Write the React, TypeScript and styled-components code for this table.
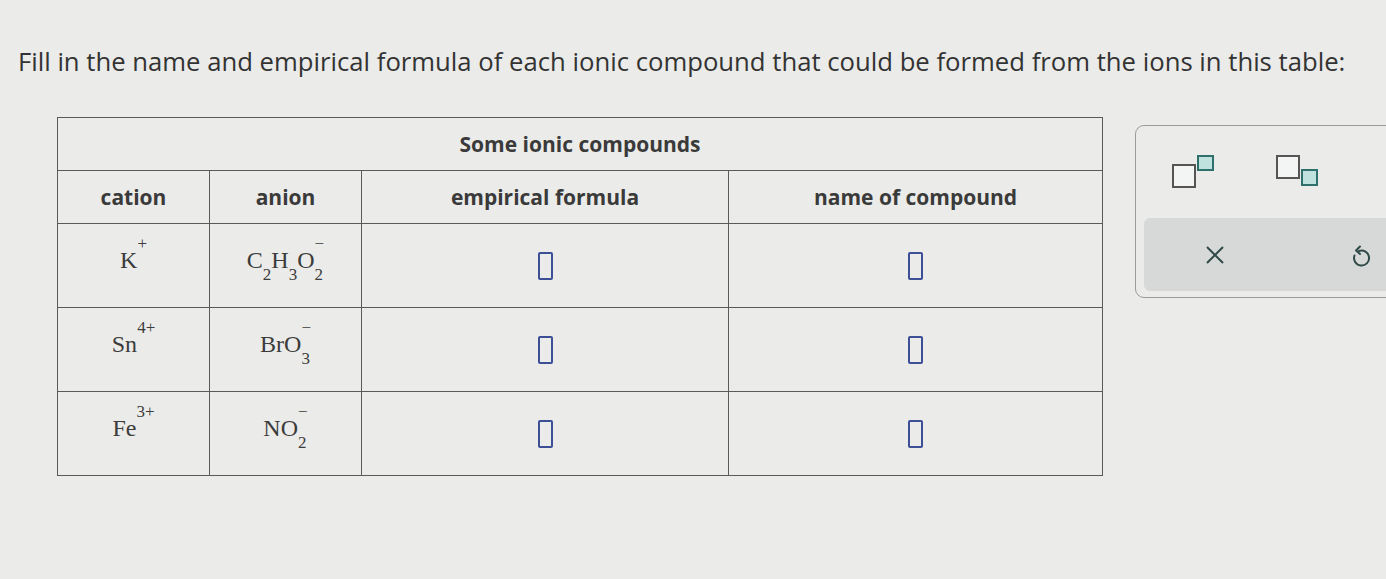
import styled, { createGlobalStyle } from "styled-components";

const GlobalStyle = createGlobalStyle`
  html, body {
    margin: 0;
    padding: 0;
    background: #ebebe9;
    overflow: hidden;
  }
`;

const Page = styled.div`
  width: 1386px;
  height: 579px;
  padding: 44px 0 0 18px;
  box-sizing: border-box;
  font-family: "Open Sans", "Liberation Sans", sans-serif;
  color: #333;
`;

const Question = styled.p`
  margin: 0;
  font-size: 25.7px;
  line-height: 36px;
  white-space: nowrap;
`;

const Body = styled.div`
  display: flex;
  align-items: flex-start;
  margin-top: 37px;
  padding-left: 39px;
`;

const Table = styled.table`
  border-collapse: collapse;
  width: 1045px;
  table-layout: fixed;
`;

const Cell = styled.td<{ h?: number }>`
  border: 1.5px solid #5a5a5a;
  text-align: center;
  vertical-align: middle;
  height: ${(p) => p.h ?? 83}px;
  padding: 0;
`;

const HeadCell = styled(Cell)`
  font-size: 21px;
  font-weight: 700;
  color: #3a3a3a;
`;

const Ion = styled.span`
  font-family: "Liberation Serif", "Times New Roman", serif;
  font-size: 24px;
  color: #3c3c3c;
  display: inline-flex;
  align-items: center;
  transform: translateY(-5px);
`;

const Scripts = styled.span`
  display: inline-flex;
  flex-direction: column;
  align-items: flex-start;
  font-size: 17px;
  line-height: 17px;
`;

const Sup = styled.span`
  height: 17px;
  transform: translateY(-9px);
`;

const Sub = styled.span`
  height: 17px;
  transform: translateY(5px);
`;

const AnswerBox = styled.span`
  display: inline-block;
  width: 11px;
  height: 24px;
  border: 2px solid #3d4f96;
  border-radius: 2px;
  vertical-align: middle;
`;

const Panel = styled.div`
  margin-left: 32px;
  margin-top: 8px;
  width: 280px;
  flex-shrink: 0;
  height: 173px;
  border: 1.5px solid #9a9c9b;
  border-radius: 9px;
  box-sizing: border-box;
  display: flex;
  flex-direction: column;
`;

const IconRow = styled.div`
  display: flex;
  align-items: center;
  gap: 58px;
  height: 92px;
  padding-left: 35px;
`;

const ActionBar = styled.div`
  margin: 0 0 6px 8px;
  flex: 1;
  background: #d6d9d8;
  border-radius: 6px 0 0 6px;
  display: flex;
  align-items: center;
  padding-left: 60px;
  gap: 124px;
`;

const IconButton = styled.button`
  background: none;
  border: none;
  padding: 0;
  display: flex;
  cursor: pointer;
`;

function Stack({ sup, sub }: { sup?: string; sub?: string }) {
  return (
    <Scripts>
      <Sup>{sup ?? "\u00a0"}</Sup>
      <Sub>{sub ?? "\u00a0"}</Sub>
    </Scripts>
  );
}

const rows = [
  {
    cation: (
      <Ion>
        K<Stack sup="+" />
      </Ion>
    ),
    anion: (
      <Ion>
        C<Stack sub="2" />H<Stack sub="3" />O<Stack sup="−" sub="2" />
      </Ion>
    ),
  },
  {
    cation: (
      <Ion>
        Sn<Stack sup="4+" />
      </Ion>
    ),
    anion: (
      <Ion>
        BrO<Stack sup="−" sub="3" />
      </Ion>
    ),
  },
  {
    cation: (
      <Ion>
        Fe<Stack sup="3+" />
      </Ion>
    ),
    anion: (
      <Ion>
        NO<Stack sup="−" sub="2" />
      </Ion>
    ),
  },
];

function SuperscriptIcon() {
  return (
    <svg width="46" height="36" viewBox="0 0 46 36">
      <rect x="2" y="11" width="22" height="22" fill="#f3f5f4" stroke="#555" strokeWidth="2" />
      <rect x="27" y="2" width="15" height="14" fill="#bfe2df" stroke="#2f6f6c" strokeWidth="2" />
    </svg>
  );
}

function SubscriptIcon() {
  return (
    <svg width="46" height="36" viewBox="0 0 46 36">
      <rect x="2" y="2" width="22" height="22" fill="#f3f5f4" stroke="#555" strokeWidth="2" />
      <rect x="27" y="16" width="15" height="15" fill="#bfe2df" stroke="#2f6f6c" strokeWidth="2" />
    </svg>
  );
}

function ClearIcon() {
  return (
    <svg width="22" height="22" viewBox="0 0 22 22">
      <path d="M3 3 L19 19 M19 3 L3 19" stroke="#2f4a48" strokeWidth="2" fill="none" />
    </svg>
  );
}

function UndoIcon() {
  return (
    <svg width="22" height="24" viewBox="0 0 22 24">
      <path
        d="M9 8 A7.5 7.5 0 1 1 4.5 12.5"
        stroke="#2f4a48"
        strokeWidth="2"
        fill="none"
        strokeLinecap="round"
      />
      <path
        d="M10 3.5 L6 7.5 L10 11"
        stroke="#2f4a48"
        strokeWidth="2"
        fill="none"
        strokeLinecap="round"
        strokeLinejoin="round"
      />
    </svg>
  );
}

export default function App() {
  return (
    <>
      <GlobalStyle />
      <Page>
        <Question>
          Fill in the name and empirical formula of each ionic compound that could be formed from the ions in this table:
        </Question>
        <Body>
          <Table>
            <colgroup>
              <col style={{ width: 152 }} />
              <col style={{ width: 152 }} />
              <col style={{ width: 367 }} />
              <col style={{ width: 374 }} />
            </colgroup>
            <tbody>
              <tr>
                <HeadCell h={52} colSpan={4}>
                  Some ionic compounds
                </HeadCell>
              </tr>
              <tr>
                <HeadCell h={52}>cation</HeadCell>
                <HeadCell h={52}>anion</HeadCell>
                <HeadCell h={52}>empirical formula</HeadCell>
                <HeadCell h={52}>name of compound</HeadCell>
              </tr>
              {rows.map((r, i) => (
                <tr key={i}>
                  <Cell>{r.cation}</Cell>
                  <Cell>{r.anion}</Cell>
                  <Cell>
                    <AnswerBox />
                  </Cell>
                  <Cell>
                    <AnswerBox />
                  </Cell>
                </tr>
              ))}
            </tbody>
          </Table>
          <Panel>
            <IconRow>
              <IconButton aria-label="superscript">
                <SuperscriptIcon />
              </IconButton>
              <IconButton aria-label="subscript">
                <SubscriptIcon />
              </IconButton>
            </IconRow>
            <ActionBar>
              <IconButton aria-label="clear">
                <ClearIcon />
              </IconButton>
              <IconButton aria-label="undo">
                <UndoIcon />
              </IconButton>
            </ActionBar>
          </Panel>
        </Body>
      </Page>
    </>
  );
}
